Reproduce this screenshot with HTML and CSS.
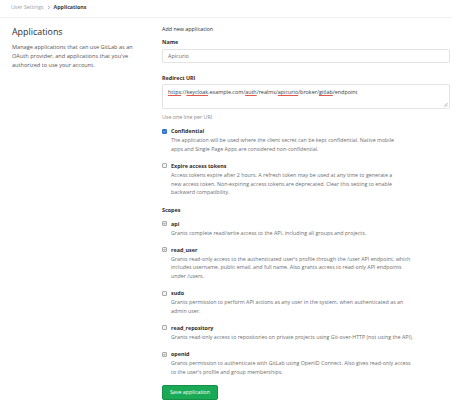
FILE: index.html
```html
<!DOCTYPE html>
<html lang="en">
<head>
<meta charset="utf-8">
<title>Applications · User Settings</title>
<link rel="stylesheet" href="styles.css">
</head>
<body>
<nav class="crumbs">
  <span class="crumb">User Settings</span>
  <svg class="chev" width="4" height="5" viewBox="0 0 4 5"><path d="M1 0.8 L2.8 2.5 L1 4.2" fill="none" stroke="#9a9a9a" stroke-width="0.8"/></svg>
  <span class="crumb current">Applications</span>
</nav>
<main class="layout">
  <section class="intro">
    <h4 class="title">Applications</h4>
    <p class="lead">Manage applications that can use GitLab as an<br>OAuth provider, and applications that you've<br>authorized to use your account.</p>
  </section>
  <form class="form">
    <h5 class="form-title">Add new application</h5>
    <label class="field-label">Name</label>
    <div class="input">Apicurio</div>
    <label class="field-label uri-label">Redirect URI</label>
    <div class="textarea">
      <span class="sp">https</span>://<span class="sp">keycloak</span>.example.com/<span class="sp">auth</span>/realms/<span class="sp">apicurio</span>/broker/<span class="sp">gitlab</span>/endpoint
      <svg class="grip" width="5" height="5" viewBox="0 0 5 5"><path d="M4.5 1 L1 4.5 M4.5 2.7 L2.7 4.5 M4.5 4.2 L4.2 4.5" stroke="#9b9b9b" stroke-width="0.7"/></svg>
    </div>
    <p class="help">Use one line per URI</p>

    <div class="check first">
      <div class="check-row"><span class="box box-blue"><svg width="5" height="5" viewBox="0 0 5 5"><path d="M1 2.6 L2.1 3.7 L4.1 1.3" fill="none" stroke="#fff" stroke-width="0.9"/></svg></span><span class="check-label">Confidential</span></div>
      <p class="check-desc">The application will be used where the client secret can be kept confidential. Native mobile<br>apps and Single Page Apps are considered non-confidential.</p>
    </div>
    <div class="check">
      <div class="check-row"><span class="box"></span><span class="check-label">Expire access tokens</span></div>
      <p class="check-desc">Access tokens expire after 2 hours. A refresh token may be used at any time to generate a<br>new access token. Non-expiring access tokens are deprecated. Clear this setting to enable<br>backward compatibility.</p>
    </div>

    <div class="scopes-label">Scopes</div>
    <div class="check scope-first">
      <div class="check-row"><span class="box"><svg width="5" height="5" viewBox="0 0 5 5"><path d="M1 2.6 L2.1 3.7 L4.1 1.3" fill="none" stroke="#333" stroke-width="0.9"/></svg></span><span class="check-label">api</span></div>
      <p class="check-desc">Grants complete read/write access to the API, including all groups and projects.</p>
    </div>
    <div class="check">
      <div class="check-row"><span class="box"><svg width="5" height="5" viewBox="0 0 5 5"><path d="M1 2.6 L2.1 3.7 L4.1 1.3" fill="none" stroke="#333" stroke-width="0.9"/></svg></span><span class="check-label">read_user</span></div>
      <p class="check-desc">Grants read-only access to the authenticated user's profile through the /user API endpoint, which<br>includes username, public email, and full name. Also grants access to read-only API endpoints<br>under /users.</p>
    </div>
    <div class="check">
      <div class="check-row"><span class="box"></span><span class="check-label">sudo</span></div>
      <p class="check-desc">Grants permission to perform API actions as any user in the system, when authenticated as an<br>admin user.</p>
    </div>
    <div class="check">
      <div class="check-row"><span class="box"></span><span class="check-label">read_repository</span></div>
      <p class="check-desc">Grants read-only access to repositories on private projects using Git-over-HTTP (not using the API).</p>
    </div>
    <div class="check">
      <div class="check-row"><span class="box"><svg width="5" height="5" viewBox="0 0 5 5"><path d="M1 2.6 L2.1 3.7 L4.1 1.3" fill="none" stroke="#333" stroke-width="0.9"/></svg></span><span class="check-label">openid</span></div>
      <p class="check-desc">Grants permission to authenticate with GitLab using OpenID Connect. Also gives read-only access<br>to the user's profile and group memberships.</p>
    </div>

    <button type="button" class="btn-save">Save application</button>
  </form>
</main>
</body>
</html>
```
FILE: styles.css
```css
* { box-sizing: border-box; }
html, body { margin: 0; padding: 0; background: #fff; }
body {
  font-family: "Open Sans", "Noto Sans", sans-serif;
  color: #2e2e2e;
  width: 474px;
  height: 409px;
  overflow: hidden;
}
p, h4, h5 { margin: 0; }

.crumbs {
  width: 452px;
  height: 18px;
  padding: 4px 0 0 11px;
  border-bottom: 1px solid #efefef;
  display: flex;
  align-items: flex-start;
  gap: 2px;
  font-size: 5.3px;
  line-height: 7px;
}
.crumb { color: #a0a0a0; }
.crumb.current { color: #3a3a3a; font-weight: 700; }
.chev { margin: 1px 1px 0 1px; }

.layout {
  display: grid;
  grid-template-columns: 138px 288px;
  column-gap: 12px;
  padding-left: 12px;
}

.title {
  margin-top: 8px;
  font-size: 8.9px;
  line-height: 12px;
  font-weight: 400;
  color: #2e2e2e;
}
.lead {
  margin-top: 5px;
  font-size: 5.6px;
  line-height: 9px;
  color: #555;
  white-space: nowrap;
}

.form { display: flex; flex-direction: column; align-items: flex-start; }
.form-title {
  margin-top: 6.5px;
  font-size: 5.4px;
  line-height: 9px;
  font-weight: 400;
  color: #2e2e2e;
}
.field-label {
  margin-top: 4px;
  font-size: 5.4px;
  line-height: 9px;
  font-weight: 700;
  color: #2e2e2e;
}
.uri-label { margin-top: 10.5px; }
.input {
  margin-top: 2.5px;
  width: 288px;
  height: 14px;
  border: 1px solid #e3e3e3;
  border-radius: 2px;
  padding: 0 5px;
  font-size: 5.4px;
  line-height: 12px;
  color: #6a6a6a;
}
.textarea {
  position: relative;
  margin-top: 1.5px;
  width: 288px;
  height: 25px;
  border: 1px solid #e3e3e3;
  border-radius: 2px;
  padding: 3px 5px 0;
  font-size: 5.4px;
  line-height: 8px;
  color: #3a3a3a;
  white-space: nowrap;
}
.sp {
  text-decoration: underline;
  text-decoration-color: #e2574c;
  text-decoration-thickness: 0.6px;
  text-underline-offset: 1.2px;
}
.grip { position: absolute; right: 1px; bottom: 1px; }
.help {
  margin-top: 3.5px;
  font-size: 5.3px;
  line-height: 9px;
  color: #8a8a8a;
}

.check { margin-top: 7.4px; }
.check.first { margin-top: 4.5px; }
.check.scope-first { margin-top: 4px; }
.check-row {
  display: flex;
  align-items: center;
  height: 10px;
}
.box {
  width: 5px;
  height: 5px;
  border: 0.6px solid #a9a9a9;
  border-radius: 1px;
  background: #f4f4f4;
  margin-right: 4px;
  display: inline-flex;
  align-items: center;
  justify-content: center;
}
.box svg { display: block; }
.box-blue { background: #2a74cf; border-color: #2a74cf; }
.check-label {
  font-size: 5.4px;
  font-weight: 700;
  color: #2e2e2e;
}
.check-desc {
  padding-left: 9px;
  font-size: 5.3px;
  line-height: 8.7px;
  color: #6e6e6e;
  white-space: nowrap;
}
.scopes-label {
  margin-top: 7.7px;
  font-size: 5.4px;
  line-height: 10px;
  font-weight: 700;
  color: #2e2e2e;
}

.btn-save {
  margin-top: 8.5px;
  width: 56px;
  height: 15px;
  padding: 0;
  border: 1px solid #168f48;
  border-radius: 2px;
  background: #1aaa55;
  color: #fff;
  font-family: "Open Sans", "Noto Sans", sans-serif;
  font-size: 5.3px;
  line-height: 13px;
}
```
